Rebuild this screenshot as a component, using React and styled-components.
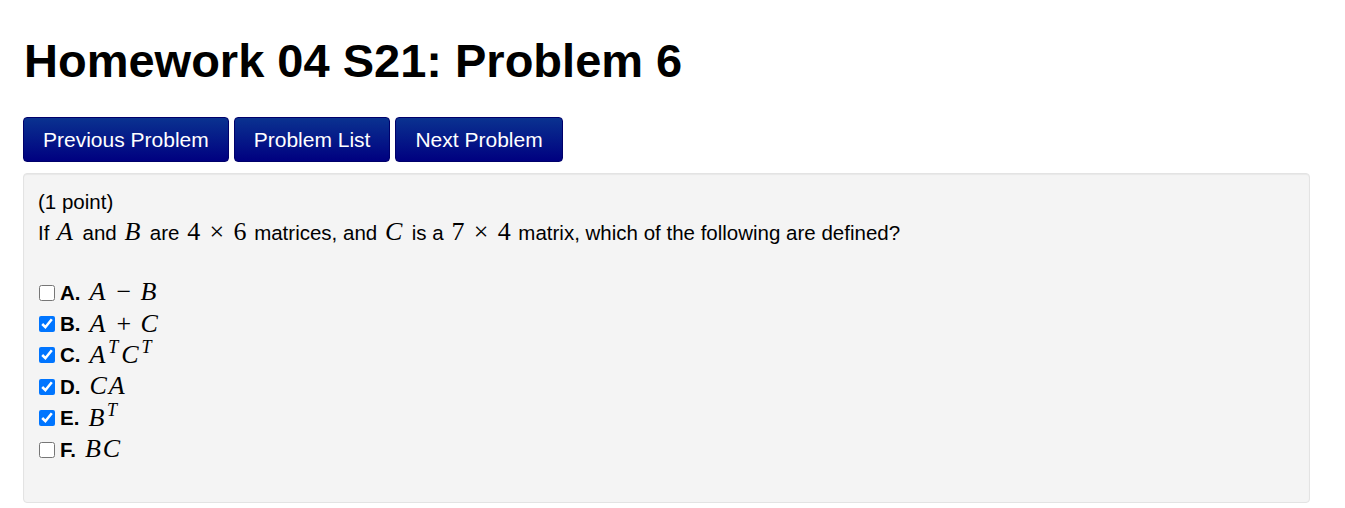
import React from 'react';
import styled, { createGlobalStyle } from 'styled-components';

const GlobalStyle = createGlobalStyle`
  body {
    margin: 0;
    background: #fff;
    font-family: "Liberation Sans", Arial, sans-serif;
    color: #000;
  }
`;

const Page = styled.div`
  padding: 35px 35px 0 23px;
`;

const Title = styled.h1`
  font-size: 47px;
  line-height: 51px;
  font-weight: bold;
  margin: 0 0 31px 1px;
`;

const Nav = styled.div`
  display: flex;
  gap: 5px;
  margin-bottom: 11px;
`;

const NavButton = styled.button`
  font-family: "Liberation Sans", Arial, sans-serif;
  font-size: 21px;
  color: #fff;
  height: 45px;
  padding: 0 19px;
  border: 1px solid #00006a;
  border-radius: 4px;
  background: linear-gradient(to bottom, #0a3290, #000080);
  cursor: pointer;
`;

const Well = styled.div`
  background: #f4f4f4;
  border: 1px solid #e3e3e3;
  border-radius: 4px;
  box-shadow: inset 0 1px 1px rgba(0, 0, 0, 0.05);
  padding: 13px 14px 37px 14px;
  font-size: 20.5px;
  line-height: 30px;
  width: 1257px;
`;

const Line = styled.div`
  min-height: 30px;
`;

const Options = styled.div`
  margin-top: 29px;
`;

const Option = styled.label`
  display: flex;
  align-items: center;
  height: 31.4px;
`;

const Box = styled.input`
  width: 16px;
  height: 16px;
  margin: 0 5px 0 1px;
  accent-color: #0075ff;
`;

const Letter = styled.b`
  margin-right: 7px;
`;

const Formula = styled.span`
  white-space: nowrap;
  margin: 0 1px;
`;

const M = styled.span`
  font-family: "Liberation Serif", "Times New Roman", serif;
  font-size: 26px;
  font-style: ${({ $up }) => ($up ? 'normal' : 'italic')};
  margin: ${({ $op }) => ($op ? '0 0.32em' : '0 1px')};
  letter-spacing: ${({ $up }) => ($up ? '0' : '0.07em')};
`;

const Sup = styled.sup`
  font-family: "Liberation Serif", "Times New Roman", serif;
  font-style: italic;
  font-size: 18px;
  vertical-align: 10px;
  line-height: 0;
  margin-right: 2px;
`;

const options = [
  { key: 'A', checked: false, math: <><M>A</M><M $up $op>−</M><M>B</M></> },
  { key: 'B', checked: true, math: <><M>A</M><M $up $op>+</M><M>C</M></> },
  { key: 'C', checked: true, math: <><M>A</M><Sup>T</Sup><M>C</M><Sup>T</Sup></> },
  { key: 'D', checked: true, math: <><M>CA</M></> },
  { key: 'E', checked: true, math: <><M>B</M><Sup>T</Sup></> },
  { key: 'F', checked: false, math: <><M>BC</M></> },
];

export default function App() {
  return (
    <Page>
      <GlobalStyle />
      <Title>Homework 04 S21: Problem 6</Title>
      <Nav>
        <NavButton>Previous Problem</NavButton>
        <NavButton>Problem List</NavButton>
        <NavButton>Next Problem</NavButton>
      </Nav>
      <Well>
        <Line>(1 point)</Line>
        <Line>
          If <Formula><M>A</M></Formula> and <Formula><M>B</M></Formula> are{' '}
          <Formula><M $up>4</M><M $up $op>×</M><M $up>6</M></Formula> matrices, and{' '}
          <Formula><M>C</M></Formula> is a{' '}
          <Formula><M $up>7</M><M $up $op>×</M><M $up>4</M></Formula> matrix, which of the
          following are defined?
        </Line>
        <Options>
          {options.map((o) => (
            <Option key={o.key}>
              <Box type="checkbox" defaultChecked={o.checked} />
              <Letter>{o.key}.</Letter>
              <Formula>{o.math}</Formula>
            </Option>
          ))}
        </Options>
      </Well>
    </Page>
  );
}
